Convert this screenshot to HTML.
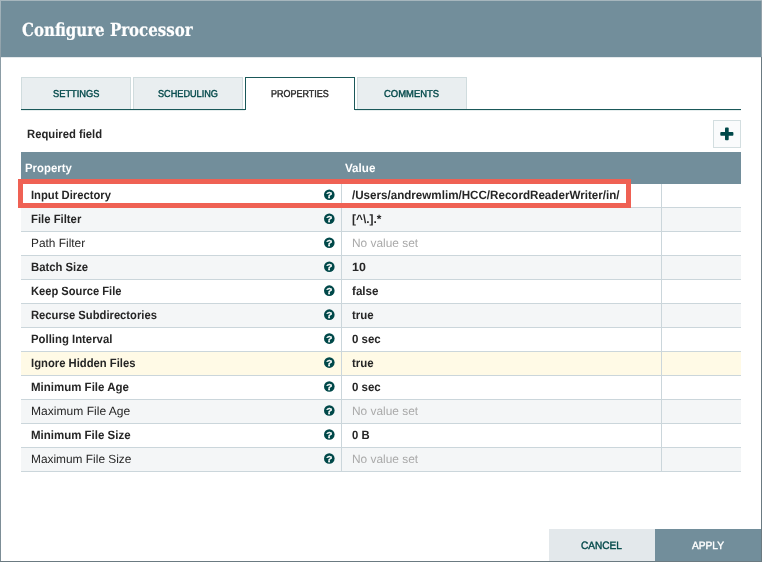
<!DOCTYPE html>
<html lang="en">
<head>
<meta charset="utf-8">
<title>Configure Processor</title>
<style>
html,body{margin:0;padding:0;}
body{width:762px;height:562px;overflow:hidden;background:#6b7a81;position:relative;font-family:"Liberation Sans",sans-serif;color:#262626;}
#edge-t{position:absolute;left:0;top:0;width:762px;height:1px;background:#a6b6bd;}
#edge-l{position:absolute;left:0;top:0;width:1px;height:561px;background:linear-gradient(#a6b6bd,#8c9da6 60px,#7c8d96);}
#edge-r{position:absolute;left:761px;top:1px;width:1px;height:56px;background:#93a2aa;}
#dialog{position:absolute;left:1px;top:1px;width:760px;height:560px;background:#fff;}
#wrap{position:absolute;left:-1px;top:-1px;width:762px;height:562px;will-change:transform;}
#wrap>*,#tabs>*,#table>*{position:absolute;}
.t{position:absolute;margin:0;text-rendering:geometricPrecision;white-space:nowrap;transform-origin:0 50%;line-height:20px;height:20px;font-weight:normal;}
#header{left:1px;top:1px;width:760px;height:56px;background:#728e9b;border-bottom:1px solid #e4e9ec;}
.title{font-family:"DejaVu Serif Condensed","DejaVu Serif","Liberation Serif",serif;font-size:18px;font-weight:bold;color:#fff;-webkit-text-stroke:0.2px;}
#tabs{left:0;top:0;}
.tab{top:77px;height:32px;box-sizing:border-box;border:1px solid #d0dcde;border-bottom:none;background:#e9eef0;color:#004849;}
.tab.sel{background:#fff;border-color:#1a5859;height:33px;z-index:2;color:#262626;}
.tabt{font-size:10px;-webkit-text-stroke:0.4px;}
#tabline{left:21px;top:109px;width:720px;height:1px;background:#1a5859;z-index:1;}
.tabsh{top:110px;height:1px;background:#e6eeee;}
.reqf{font-size:12px;font-weight:bold;}
#plus{left:713px;top:120px;width:28px;height:28px;box-sizing:border-box;border:1px solid #d3dee0;background:#fafbfc;}
#plus svg{position:absolute;left:-1px;top:-1px;}
#table{left:0;top:0;}
#thead{left:21px;top:152px;width:720px;height:32px;background:#728e9b;color:#fff;}
.th{font-size:12px;font-weight:bold;}
.row{left:21px;width:720px;border-bottom:1px solid #cbd6db;background:#fff;}
.row.g{background:#f4f6f7;}
.row.y{background:#fffae6;}
.nm{font-size:11.9px;}
.nm.req,.vl{font-size:12px;font-weight:bold;}
.un{font-size:11.9px;color:#aaaaaa;}
.q{position:absolute;overflow:visible;}
.vline{top:184px;width:1px;height:287px;background:#cbd6db;}
#hl{left:18px;top:179px;width:613px;height:29px;box-sizing:border-box;border:5px solid #ef6154;z-index:5;}
.btn{top:529px;width:106px;height:32px;}
#cancel{left:549px;background:#e3e8eb;color:#004849;}
#apply{left:655px;background:#728e9b;color:#fff;}
.btnt{font-size:10.7px;-webkit-text-stroke:0.4px;}
</style>
</head>
<body>
<div id="edge-t"></div><div id="edge-l"></div><div id="edge-r"></div>
<div id="dialog"><div id="wrap">
<div id="header"><h1 class="t title" style="left:20.90px;top:20px;transform:scaleX(0.9269);">Configure Processor</h1></div>
<div id="tabs">
<div class="tab" style="left:21px;width:110px"><span class="t tabt" style="left:30.79px;top:7px;transform:scaleX(0.9281);">SETTINGS</span></div>
<div class="tab" style="left:133px;width:110px"><span class="t tabt" style="left:24.01px;top:7px;transform:scaleX(0.9147);">SCHEDULING</span></div>
<div class="tab sel" style="left:245px;width:110px"><span class="t tabt" style="left:25.28px;top:7px;transform:scaleX(0.8967);">PROPERTIES</span></div>
<div class="tab" style="left:357px;width:110px"><span class="t tabt" style="left:26.47px;top:7px;transform:scaleX(0.9438);">COMMENTS</span></div>
</div>
<div id="tabline"></div><div class="tabsh" style="left:21px;width:224px"></div><div class="tabsh" style="left:355px;width:386px"></div>
<div class="t reqf" style="left:27.00px;top:124px;transform:scaleX(0.9383);">Required field</div>
<div id="plus"><svg width="28" height="28" viewBox="0 0 28 28"><rect x="7.3" y="12.05" width="13.1" height="3.7" rx="0.9" fill="#004849"/><rect x="12" y="7.6" width="3.7" height="12.6" rx="0.9" fill="#004849"/></svg></div>
<div id="table">
<div id="thead"><span class="t th" style="left:4.00px;top:6px;transform:scaleX(0.9471);">Property</span><span class="t th" style="left:324.00px;top:6px;transform:scaleX(0.9686);">Value</span></div>
<div class="row w" style="top:184px;height:23px"><span class="t nm req" style="left:10.00px;top:1px;transform:scaleX(0.9370);">Input Directory</span><svg class="q" style="left:303px;top:5px" width="11" height="11" viewBox="0 0 11 11"><circle cx="5.3" cy="5.78" r="5.3" fill="#004849"/><text transform="translate(5.3 9.23) scale(1.16 1)" text-anchor="middle" font-family="Liberation Sans, sans-serif" font-weight="bold" font-size="8.7" fill="#fff" stroke="#fff" stroke-width="0.25">?</text></svg><span class="t vl" style="left:331.00px;top:1px;transform:scaleX(0.9673);">/Users/andrewmlim/HCC/RecordReaderWriter/in/</span></div>
<div class="row g" style="top:208px;height:23px"><span class="t nm req" style="left:10.00px;top:1px;transform:scaleX(0.9426);">File Filter</span><svg class="q" style="left:303px;top:5px" width="11" height="11" viewBox="0 0 11 11"><circle cx="5.3" cy="5.75" r="5.3" fill="#004849"/><text transform="translate(5.3 9.20) scale(1.16 1)" text-anchor="middle" font-family="Liberation Sans, sans-serif" font-weight="bold" font-size="8.7" fill="#fff" stroke="#fff" stroke-width="0.25">?</text></svg><span class="t vl" style="left:331.00px;top:1px;transform:scaleX(0.9900);">[^\.].*</span></div>
<div class="row w" style="top:232px;height:23px"><span class="t nm" style="left:10.00px;top:1px;">Path Filter</span><svg class="q" style="left:303px;top:5px" width="11" height="11" viewBox="0 0 11 11"><circle cx="5.3" cy="5.72" r="5.3" fill="#004849"/><text transform="translate(5.3 9.17) scale(1.16 1)" text-anchor="middle" font-family="Liberation Sans, sans-serif" font-weight="bold" font-size="8.7" fill="#fff" stroke="#fff" stroke-width="0.25">?</text></svg><span class="t un" style="left:331.00px;top:1px;">No value set</span></div>
<div class="row g" style="top:256px;height:23px"><span class="t nm req" style="left:10.00px;top:1px;transform:scaleX(0.9418);">Batch Size</span><svg class="q" style="left:303px;top:5px" width="11" height="11" viewBox="0 0 11 11"><circle cx="5.3" cy="5.69" r="5.3" fill="#004849"/><text transform="translate(5.3 9.14) scale(1.16 1)" text-anchor="middle" font-family="Liberation Sans, sans-serif" font-weight="bold" font-size="8.7" fill="#fff" stroke="#fff" stroke-width="0.25">?</text></svg><span class="t vl" style="left:331.00px;top:1px;transform:scaleX(1.0316);">10</span></div>
<div class="row w" style="top:280px;height:23px"><span class="t nm req" style="left:10.00px;top:1px;transform:scaleX(0.9291);">Keep Source File</span><svg class="q" style="left:303px;top:5px" width="11" height="11" viewBox="0 0 11 11"><circle cx="5.3" cy="5.67" r="5.3" fill="#004849"/><text transform="translate(5.3 9.12) scale(1.16 1)" text-anchor="middle" font-family="Liberation Sans, sans-serif" font-weight="bold" font-size="8.7" fill="#fff" stroke="#fff" stroke-width="0.25">?</text></svg><span class="t vl" style="left:331.00px;top:1px;transform:scaleX(0.9703);">false</span></div>
<div class="row g" style="top:304px;height:23px"><span class="t nm req" style="left:10.00px;top:1px;transform:scaleX(0.9344);">Recurse Subdirectories</span><svg class="q" style="left:303px;top:5px" width="11" height="11" viewBox="0 0 11 11"><circle cx="5.3" cy="5.63" r="5.3" fill="#004849"/><text transform="translate(5.3 9.08) scale(1.16 1)" text-anchor="middle" font-family="Liberation Sans, sans-serif" font-weight="bold" font-size="8.7" fill="#fff" stroke="#fff" stroke-width="0.25">?</text></svg><span class="t vl" style="left:331.00px;top:1px;transform:scaleX(0.9552);">true</span></div>
<div class="row w" style="top:328px;height:23px"><span class="t nm req" style="left:10.00px;top:1px;transform:scaleX(0.9462);">Polling Interval</span><svg class="q" style="left:303px;top:5px" width="11" height="11" viewBox="0 0 11 11"><circle cx="5.3" cy="5.61" r="5.3" fill="#004849"/><text transform="translate(5.3 9.06) scale(1.16 1)" text-anchor="middle" font-family="Liberation Sans, sans-serif" font-weight="bold" font-size="8.7" fill="#fff" stroke="#fff" stroke-width="0.25">?</text></svg><span class="t vl" style="left:331.00px;top:1px;transform:scaleX(0.9579);">0 sec</span></div>
<div class="row y" style="top:352px;height:23px"><span class="t nm req" style="left:10.00px;top:1px;transform:scaleX(0.9388);">Ignore Hidden Files</span><svg class="q" style="left:303px;top:5px" width="11" height="11" viewBox="0 0 11 11"><circle cx="5.3" cy="5.58" r="5.3" fill="#004849"/><text transform="translate(5.3 9.03) scale(1.16 1)" text-anchor="middle" font-family="Liberation Sans, sans-serif" font-weight="bold" font-size="8.7" fill="#fff" stroke="#fff" stroke-width="0.25">?</text></svg><span class="t vl" style="left:331.00px;top:1px;transform:scaleX(0.9552);">true</span></div>
<div class="row w" style="top:376px;height:23px"><span class="t nm req" style="left:10.00px;top:1px;transform:scaleX(0.9574);">Minimum File Age</span><svg class="q" style="left:303px;top:5px" width="11" height="11" viewBox="0 0 11 11"><circle cx="5.3" cy="5.55" r="5.3" fill="#004849"/><text transform="translate(5.3 9.00) scale(1.16 1)" text-anchor="middle" font-family="Liberation Sans, sans-serif" font-weight="bold" font-size="8.7" fill="#fff" stroke="#fff" stroke-width="0.25">?</text></svg><span class="t vl" style="left:331.00px;top:1px;transform:scaleX(0.9579);">0 sec</span></div>
<div class="row g" style="top:400px;height:23px"><span class="t nm" style="left:10.00px;top:1px;transform:scaleX(1.0150);">Maximum File Age</span><svg class="q" style="left:303px;top:5px" width="11" height="11" viewBox="0 0 11 11"><circle cx="5.3" cy="5.51" r="5.3" fill="#004849"/><text transform="translate(5.3 8.96) scale(1.16 1)" text-anchor="middle" font-family="Liberation Sans, sans-serif" font-weight="bold" font-size="8.7" fill="#fff" stroke="#fff" stroke-width="0.25">?</text></svg><span class="t un" style="left:331.00px;top:1px;">No value set</span></div>
<div class="row w" style="top:424px;height:23px"><span class="t nm req" style="left:10.00px;top:1px;transform:scaleX(0.9570);">Minimum File Size</span><svg class="q" style="left:303px;top:4px" width="11" height="11" viewBox="0 0 11 11"><circle cx="5.3" cy="6.49" r="5.3" fill="#004849"/><text transform="translate(5.3 9.94) scale(1.16 1)" text-anchor="middle" font-family="Liberation Sans, sans-serif" font-weight="bold" font-size="8.7" fill="#fff" stroke="#fff" stroke-width="0.25">?</text></svg><span class="t vl" style="left:331.00px;top:1px;transform:scaleX(0.9381);">0 B</span></div>
<div class="row g" style="top:448px;height:23px"><span class="t nm" style="left:10.00px;top:1px;">Maximum File Size</span><svg class="q" style="left:303px;top:4px" width="11" height="11" viewBox="0 0 11 11"><circle cx="5.3" cy="6.45" r="5.3" fill="#004849"/><text transform="translate(5.3 9.90) scale(1.16 1)" text-anchor="middle" font-family="Liberation Sans, sans-serif" font-weight="bold" font-size="8.7" fill="#fff" stroke="#fff" stroke-width="0.25">?</text></svg><span class="t un" style="left:331.00px;top:1px;">No value set</span></div>
<div class="vline" style="left:341px"></div><div class="vline" style="left:661px"></div>
</div>
<div id="hl"></div>
<div class="btn" id="cancel"><span class="t btnt" style="left:32.07px;top:7px;transform:scaleX(0.9423);">CANCEL</span></div><div class="btn" id="apply"><span class="t btnt" style="left:36.98px;top:7px;transform:scaleX(0.9513);">APPLY</span></div>
</div></div>
</body>
</html>
